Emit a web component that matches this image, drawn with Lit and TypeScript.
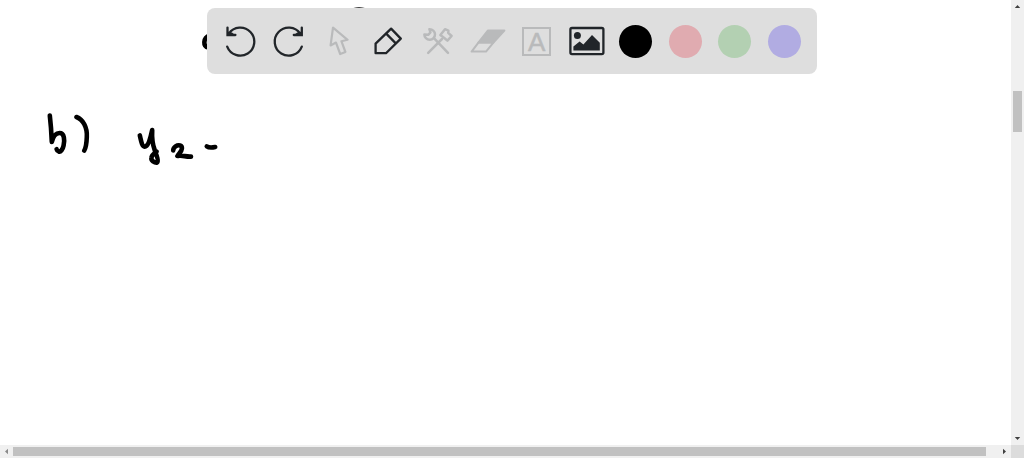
import { LitElement, html, svg, css } from "lit";
import { customElement, state } from "lit/decorators.js";

const ink = "#212529";
const faded = "#b9babb";

const icons: Record<string, unknown> = {
  Undo: svg`<g fill="none" stroke=${ink} stroke-width="2.3" stroke-linecap="round">
    <path d="M5.2 23.6A14 14 0 1 0 6.8 10.6"/><path d="M5.5 4.6V12H13.4"/><path d="M5.5 12V8.4L10 9.4L13 12Z" fill=${ink} stroke="none"/></g>`,
  Redo: svg`<g fill="none" stroke=${ink} stroke-width="2.3" stroke-linecap="round">
    <path d="M30.8 23.6A14 14 0 1 1 29.2 10.6"/><path d="M30.8 4.6V12H22.8"/><path d="M30.8 12V8.4L26.2 9.4L23 12Z" fill=${ink} stroke="none"/></g>`,
  Select: svg`<path d="M12 4.6L9.6 22.4L15 19.6L19.2 31L24.4 29L20.4 18.2L26.6 16.8Z" fill="none" stroke=${faded} stroke-width="2.2" stroke-linejoin="round"/>`,
  Pen: svg`<g fill="none" stroke=${ink} stroke-width="2.3" stroke-linejoin="round">
    <path d="M5.6 30.2V20.6L21.1 5.6L30.8 15.6L16 30.2Z"/><path d="M16.2 10.6L25.8 20.4"/></g>`,
  Tools: svg`<g fill="none" stroke=${faded} stroke-width="2.5" stroke-linejoin="round" stroke-linecap="round">
    <path d="M4.4 11.4A5.3 5.3 0 1 0 9.4 6.2M4.4 11.4L8.2 11.8L10.4 9.4L9.4 6.2"/>
    <path d="M14.4 15.6L28 29.8M8.2 29.8L22 16"/>
    <path d="M20.4 12L25 6.2L28.4 7.6L28.2 9.8L31.6 13L27.4 17.6L24.6 15.2Z"/></g>`,
  Eraser: svg`<g stroke=${faded} stroke-width="2" stroke-linejoin="round">
    <path d="M18.8 7.6H35.4L24.4 19.6H9.4Z" fill=${faded}/><path d="M9.4 19.6L2.6 28.6H17L24.4 19.6Z" fill="none"/></g>`,
  Image: svg`<rect x="2.4" y="5" width="33" height="26.2" rx="1.6" fill="none" stroke=${ink} stroke-width="2.3"/>
    <circle cx="9.4" cy="12.4" r="3.5" fill=${ink}/>
    <path d="M5.4 27.6V23.4L11.6 18.4L15.4 21.4L24 12L31.8 19.8V27.6Z" fill=${ink}/>`,
};

const tools = ["Undo", "Redo", "Select", "Pen", "Tools", "Eraser", "Text", "Image"];
const colours = ["black", "red", "green", "violet"];

@customElement("tool-bar")
class ToolBar extends LitElement {
  @state() private colour = "black";

  static styles = css`
    :host {
      box-sizing: border-box;
      display: grid;
      grid-template-columns: repeat(12, 1fr);
      align-items: center;
      justify-items: center;
      width: min(610px, 100%);
      height: 66px;
      padding: 0 8px;
      border-radius: 8px;
      background: #dedede;
    }
    button {
      display: grid;
      place-items: center;
      box-sizing: border-box;
      width: 36px;
      height: 36px;
      margin: 0;
      padding: 0;
      border: 0;
      background: none;
      cursor: pointer;
    }
    svg { display: block; width: 36px; height: 36px; overflow: visible; }
    .letter {
      box-sizing: border-box;
      width: 29px;
      height: 29px;
      border: 2px solid #b9babb;
      color: #b9babb;
      font: 26px/26px "Liberation Sans", sans-serif;
      -webkit-text-stroke: 0.5px #b9babb;
      text-align: center;
    }
    .swatch { width: 33px; height: 33px; border-radius: 50%; }
    .black { background: #000; }
    .red { background: #e0abb0; }
    .green { background: #b3d0b2; }
    .violet { background: #b1ace2; }
  `;

  render() {
    return html`
      ${tools.map((name) => html`<button aria-label=${name}>
        ${name === "Text"
          ? html`<span class="letter">A</span>`
          : html`<svg viewBox="0 0 36 36" aria-hidden="true">${icons[name]}</svg>`}
      </button>`)}
      ${colours.map((c) => html`<button
        class="swatch ${c}"
        aria-label=${c}
        aria-pressed=${this.colour === c}
        @click=${() => (this.colour = c)}
      ></button>`)}
    `;
  }
}

@customElement("app-root")
class AppRoot extends LitElement {
  static styles = css`
    :host {
      display: grid;
      grid-template-columns: minmax(0, 1fr) 13px;
      grid-template-rows: minmax(0, 1fr) 13px;
      height: 100vh;
      background: #fff;
    }
    .board { overflow: hidden; }
    .ink { display: block; width: 100%; height: 100%; }
    .overlay {
      position: absolute;
      top: 8px;
      left: 0;
      right: 0;
      display: flex;
      justify-content: center;
    }
    .bar { display: flex; background: #f0f0f0; }
    .vertical { flex-direction: column; }
    .arrow { flex: none; width: 13px; height: 13px; }
    .track { flex: 1; display: flex; min-width: 0; min-height: 0; }
    .vertical .track { flex-direction: column; padding: 0 2px; }
    .horizontal .track { padding: 2px 0; }
    .before { flex: 78; }
    .thumb { background: #c1c1c1; }
    .vertical .thumb { flex: 41; }
    .after { flex: 300; }
    .horizontal .thumb { flex: 973; }
    .rest { flex: 12; }
    .corner { background: #dcdcdc; }
  `;

  private arrow(d: string, fill = "#404040") {
    return html`<svg class="arrow" viewBox="0 0 13 13" aria-hidden="true"><path d=${d} fill=${fill} /></svg>`;
  }

  render() {
    return html`
      <main class="board">
        <svg class="ink" role="img" aria-label="b) y2 -" fill="none" stroke="#000" stroke-width="4.6" stroke-linecap="round" stroke-linejoin="round">
          <path d="M49.8 115.6C50.8 124 51.4 132 51.8 142C53 137 55.6 133 59.6 133C64.4 133 64.8 140 63.6 145.4C62.8 149.4 60.6 152.4 58.6 151.4C57.4 151 56.8 150 56.6 149.2"/>
          <path d="M76.4 117C83 119.4 87.4 127.4 86.8 137C86.6 143 86.2 147.4 84.2 150.6"/>
          <path d="M139.8 135.4C141 140 141.8 146.4 144.6 146.6C147.8 146.8 150 140 152.2 130C151.8 137 152.4 144 154.8 150.4C156.2 154.4 159 161.4 157 162.6C154.4 162.8 151 160.6 151.4 158C151.6 155.4 154.4 153 156.6 151.6"/>
          <path d="M148.6 130.4" />
          <path d="M173.2 150.4C173.4 146.8 177 144.8 180 145.4C183 146.4 182.2 150.4 179.6 153C177.6 155.8 176 156.6 179 155.8C182.4 155.2 186.4 157 191 156.6"/>
          <path d="M206.8 146.4C209.4 148.2 212.4 147.6 215.2 147"/>
          <path d="M210 35.4C202.4 37.4 203.2 47.4 208 47.4"/>
          <path d="M354 9.8C357 8.8 361 8.8 364.4 9.8" stroke-width="3.6"/>
        </svg>
      </main>
      <div class="bar vertical">
        ${this.arrow("M3.8 8L6.5 5L9.2 8Z")}
        <div class="track"><span class="before"></span><span class="thumb"></span><span class="after"></span></div>
        ${this.arrow("M3.8 5L6.5 8L9.2 5Z")}
      </div>
      <div class="bar horizontal">
        ${this.arrow("M8 3.8L5 6.5L8 9.2Z", "#8a8a8a")}
        <div class="track"><span class="thumb"></span><span class="rest"></span></div>
        ${this.arrow("M5 3.8L8 6.5L5 9.2Z")}
      </div>
      <div class="corner"></div>
      <div class="overlay"><tool-bar role="toolbar" aria-label="Drawing tools"></tool-bar></div>
    `;
  }
}
